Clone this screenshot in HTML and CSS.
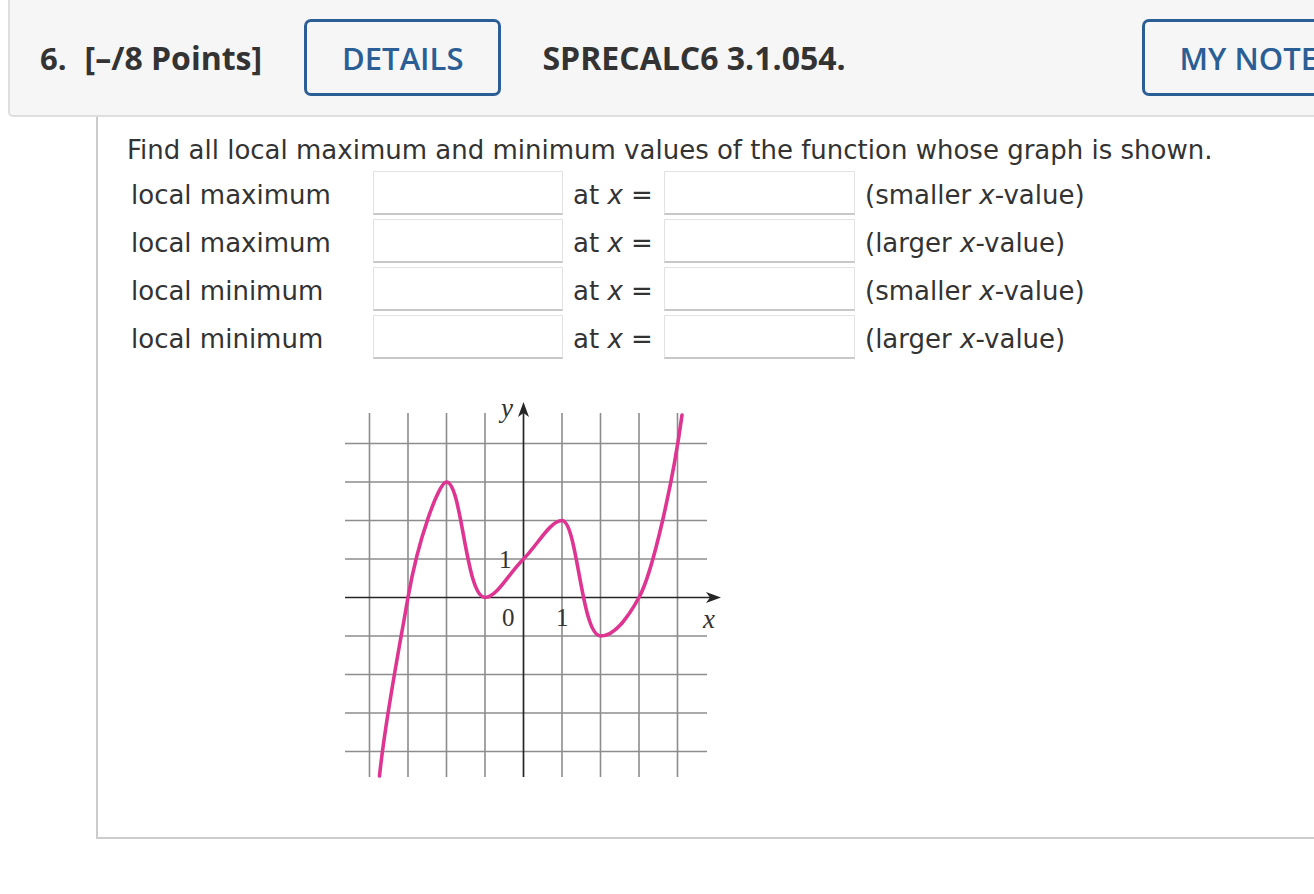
FILE: index.html
```html
<!DOCTYPE html>
<html lang="en">
<head>
<meta charset="utf-8">
<title>SPRECALC6 3.1.054</title>
<link rel="stylesheet" href="styles.css">
</head>
<body>
<div class="page">
  <header class="qhead">
    <span class="qnum">6.</span>
    <span class="pts">[–/8 Points]</span>
    <button class="btn details">DETAILS</button>
    <span class="code">SPRECALC6 3.1.054.</span>
    <button class="btn notes">MY NOTES</button>
  </header>
  <section class="qbody">
    <p class="prompt">Find all local maximum and minimum values of the function whose graph is shown.</p>
    <div class="answers">
      <span class="lbl">local maximum</span><span class="box"></span><span class="atx"><span>at <i>x</i> =</span></span><span class="box"></span><span class="hint"><span>(smaller <i>x</i>-value)</span></span>
      <span class="lbl">local maximum</span><span class="box"></span><span class="atx"><span>at <i>x</i> =</span></span><span class="box"></span><span class="hint"><span>(larger <i>x</i>-value)</span></span>
      <span class="lbl">local minimum</span><span class="box"></span><span class="atx"><span>at <i>x</i> =</span></span><span class="box"></span><span class="hint"><span>(smaller <i>x</i>-value)</span></span>
      <span class="lbl">local minimum</span><span class="box"></span><span class="atx"><span>at <i>x</i> =</span></span><span class="box"></span><span class="hint"><span>(larger <i>x</i>-value)</span></span>
    </div>
    <svg class="graph" width="385" height="385" viewBox="0 0 385 385" xmlns="http://www.w3.org/2000/svg">
      <g class="grid">
        <line x1="29.5" y1="18" x2="29.5" y2="382"/>
        <line x1="68" y1="18" x2="68" y2="382"/>
        <line x1="106.5" y1="18" x2="106.5" y2="382"/>
        <line x1="145" y1="18" x2="145" y2="382"/>
        <line x1="222" y1="18" x2="222" y2="382"/>
        <line x1="260.5" y1="18" x2="260.5" y2="382"/>
        <line x1="299" y1="18" x2="299" y2="382"/>
        <line x1="337.5" y1="18" x2="337.5" y2="382"/>
        <line x1="5" y1="48.5" x2="367" y2="48.5"/>
        <line x1="5" y1="87" x2="367" y2="87"/>
        <line x1="5" y1="125.5" x2="367" y2="125.5"/>
        <line x1="5" y1="164" x2="367" y2="164"/>
        <line x1="5" y1="241" x2="367" y2="241"/>
        <line x1="5" y1="279.5" x2="367" y2="279.5"/>
        <line x1="5" y1="318" x2="367" y2="318"/>
        <line x1="5" y1="356.5" x2="367" y2="356.5"/>
      </g>
      <g class="axes">
        <line x1="5" y1="202.5" x2="372" y2="202.5"/>
        <line x1="183.5" y1="382" x2="183.5" y2="16"/>
      </g>
      <polygon class="arrow" points="183.5,7 178,22 183.5,18 189,22"/>
      <polygon class="arrow" points="381,202.5 366,197 370,202.5 366,208"/>
      <text class="lab it" x="161" y="22">y</text>
      <text class="lab it" x="363" y="233">x</text>
      <text class="lab num" x="162" y="231">0</text>
      <text class="lab num" x="216" y="231">1</text>
      <text class="lab num" x="159" y="173">1</text>
      <path class="curve" d="M39.5,381 C45.5,322 61.46,241 68,202.5 C78,144.75 98.8,87 106.5,87 C121.9,87 125.75,202.5 145,202.5 C156.55,202.5 168.1,179.4 183.5,164 C196.98,150.53 210.45,125.5 222,125.5 C237.4,125.5 241.25,241 260.5,241 C275.9,241 289.4,219.8 299,202.5 C312.5,178.2 333,87 342,20"/>
    </svg>
  </section>
</div>
</body>
</html>
```

FILE: styles.css
```css
html, body {
  margin: 0;
  padding: 0;
  background: #ffffff;
  overflow: hidden;
}

.page {
  width: 1314px;
  height: 894px;
  overflow: hidden;
}

.qhead {
  display: flex;
  align-items: center;
  width: 1397px;
  height: 117px;
  box-sizing: border-box;
  margin-left: 8px;
  padding: 0 30px;
  background: #f6f6f6;
  border: 2px solid #dedede;
  border-top: 0;
  border-radius: 0 0 0 5px;
  font-family: "Open Sans", "Liberation Sans", sans-serif;
  color: #333333;
}

.qnum {
  font-weight: 700;
  font-size: 31px;
}

.pts {
  margin-left: 18px;
  font-weight: 700;
  font-size: 32px;
}

.btn {
  height: 77px;
  box-sizing: border-box;
  border: 3px solid #2b5e94;
  border-radius: 7px;
  background: transparent;
  color: #2b5e94;
  font-family: "Open Sans", "Liberation Sans", sans-serif;
  font-weight: 600;
  font-size: 31px;
  padding: 0 35px;
  flex: none;
}

.details {
  margin-left: 42px;
}

.code {
  margin-left: 41px;
  font-weight: 700;
  font-size: 32px;
}

.notes {
  margin-left: auto;
}

.qbody {
  margin-left: 96px;
  border-left: 2px solid #cccccc;
  border-bottom: 2px solid #cccccc;
  padding: 16px 0 57px 29px;
  font-family: "DejaVu Sans", Verdana, sans-serif;
  font-size: 26px;
  color: #333333;
}

.prompt {
  margin: 0 0 4px;
  line-height: 34px;
  white-space: nowrap;
}

.answers {
  display: grid;
  grid-template-columns: 246px 190px 101px 191px auto;
  grid-auto-rows: 44px;
  row-gap: 4px;
}

.lbl, .atx, .hint {
  display: flex;
  align-items: center;
  white-space: nowrap;
  padding-top: 4px;
  box-sizing: border-box;
}

.lbl {
  padding-left: 4px;
}

.atx, .hint {
  padding-left: 10px;
}

.box {
  box-sizing: border-box;
  border: 1px solid #e2e2e2;
  border-bottom: 2px solid #c8c8c8;
  background: #ffffff;
}

.graph {
  display: block;
  margin: 36px 0 0 213px;
  overflow: visible;
}

.grid line {
  stroke: #8d8d8d;
  stroke-width: 1.6;
}

.axes line {
  stroke: #262626;
  stroke-width: 1.7;
}

.arrow {
  fill: #262626;
}

.lab {
  fill: #333333;
  font-family: "Liberation Serif", "Times New Roman", serif;
}

.lab.it {
  font-style: italic;
  font-size: 27px;
}

.lab.num {
  font-size: 25px;
}

.curve {
  fill: none;
  stroke: #df3592;
  stroke-width: 3.6;
  stroke-linecap: round;
  stroke-linejoin: round;
}
```
